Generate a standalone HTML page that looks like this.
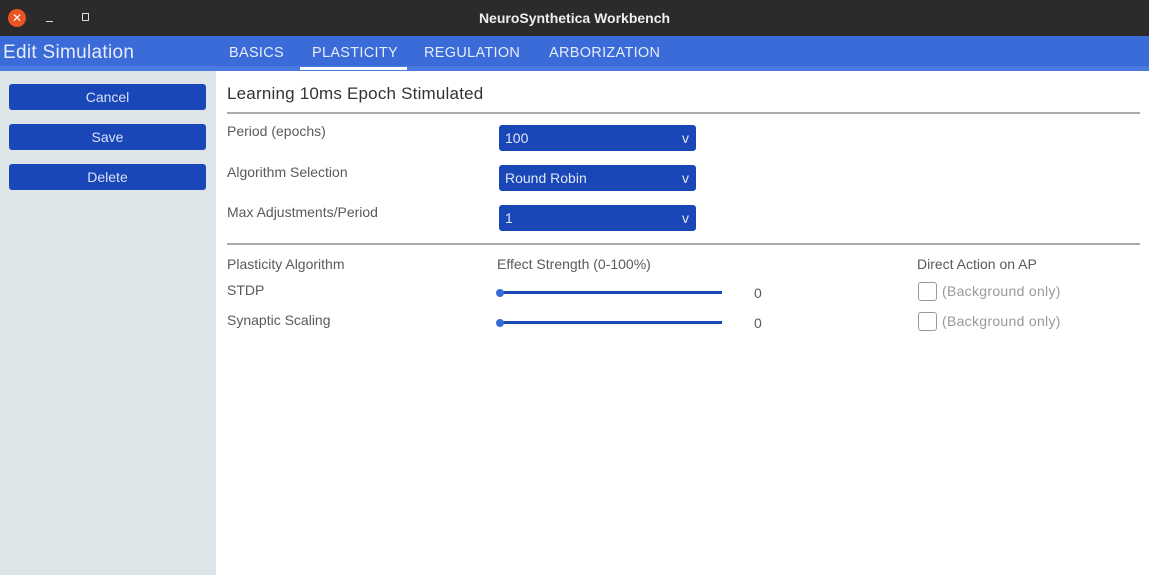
<!DOCTYPE html>
<html><head><style>
*{margin:0;padding:0;box-sizing:border-box}
body{width:1149px;height:575px;overflow:hidden;background:#fff;font-family:"Liberation Sans","DejaVu Sans",sans-serif;position:relative}
.abs{position:absolute}
.title{left:0;top:0;width:1149px;height:36px;background:#2c2a2a}
.bar{left:0;top:36px;width:1149px;height:31px;background:#3a6bd8}
.bar2{left:0;top:66px;width:1149px;height:5px;background:#4a7ae0}
.side{left:0;top:71px;width:216px;height:504px;background:#dee5e9}
.btn{left:9px;width:197px;height:26px;background:#1a47b8;border-radius:3px;color:#d8e0f5;font-size:14px;text-align:center;line-height:26px}
.tab{top:45px;color:#e6ecfa;font-size:14.5px;letter-spacing:0.3px}
.lbl{color:#5a5a5a;font-size:14px}
.sel{left:499px;width:197px;height:26px;background:#1a47b8;border-radius:3px;color:#e0e6f5;font-size:14px;line-height:26px;padding-left:6px}
.sel span{position:absolute;right:7px}
.hr{left:227px;width:913px;height:2px;background:#aaa}
.track{left:499px;width:223px;height:3px;background:#1a47b8}
.knob{width:8px;height:8px;border-radius:50%;background:#3a6bd8}
.cb{width:19px;height:19px;border:1px solid #999;border-radius:3px;left:918px}
.gray{color:#999;font-size:14px}
</style></head><body>
<div class="abs title"></div>
<div class="abs" style="left:8px;top:9px;width:18px;height:18px;border-radius:50%;background:#e95420;color:#fff;font-size:12px;text-align:center;line-height:18px">✕</div>
<div class="abs" style="left:46px;top:21px;width:7px;height:1px;background:#ddd"></div>
<div class="abs" style="left:82px;top:13px;width:7px;height:8px;border:1px solid #ddd"></div>
<div class="abs" style="left:0;width:1149px;top:10px;text-align:center;color:#eee;font-weight:bold;font-size:14px">NeuroSynthetica Workbench</div>
<div class="abs bar"></div><div class="abs bar2"></div>
<div class="abs" style="left:3px;top:42px;color:#e6ecfa;font-size:19px;letter-spacing:0.3px">Edit Simulation</div>
<div class="abs tab" style="left:229px">BASICS</div>
<div class="abs tab" style="left:312px">PLASTICITY</div>
<div class="abs tab" style="left:424px">REGULATION</div>
<div class="abs tab" style="left:549px">ARBORIZATION</div>
<div class="abs" style="left:300px;top:67px;width:107px;height:3px;background:#fff"></div>
<div class="abs side"></div>
<div class="abs btn" style="top:84px">Cancel</div>
<div class="abs btn" style="top:124px">Save</div>
<div class="abs btn" style="top:164px">Delete</div>
<div class="abs" style="left:227px;top:84px;font-size:17px;color:#333;letter-spacing:0.2px">Learning 10ms Epoch Stimulated</div>
<div class="abs hr" style="top:112px"></div>
<div class="abs lbl" style="left:227px;top:123px">Period (epochs)</div>
<div class="abs lbl" style="left:227px;top:164px">Algorithm Selection</div>
<div class="abs lbl" style="left:227px;top:204px">Max Adjustments/Period</div>
<div class="abs sel" style="top:125px">100<span>v</span></div>
<div class="abs sel" style="top:165px">Round Robin<span>v</span></div>
<div class="abs sel" style="top:205px">1<span>v</span></div>
<div class="abs hr" style="top:243px"></div>
<div class="abs lbl" style="left:227px;top:256px">Plasticity Algorithm</div>
<div class="abs lbl" style="left:497px;top:256px">Effect Strength (0-100%)</div>
<div class="abs lbl" style="left:917px;top:256px">Direct Action on AP</div>
<div class="abs lbl" style="left:227px;top:282px">STDP</div>
<div class="abs lbl" style="left:227px;top:312px">Synaptic Scaling</div>
<div class="abs track" style="top:291px"></div><div class="abs knob" style="left:496px;top:289px"></div>
<div class="abs track" style="top:321px"></div><div class="abs knob" style="left:496px;top:319px"></div>
<div class="abs lbl" style="left:754px;top:285px">0</div>
<div class="abs lbl" style="left:754px;top:315px">0</div>
<div class="abs cb" style="top:282px"></div><div class="abs gray" style="left:942px;top:283px;letter-spacing:0.3px">(Background only)</div>
<div class="abs cb" style="top:312px"></div><div class="abs gray" style="left:942px;top:313px;letter-spacing:0.3px">(Background only)</div>
</body></html>
